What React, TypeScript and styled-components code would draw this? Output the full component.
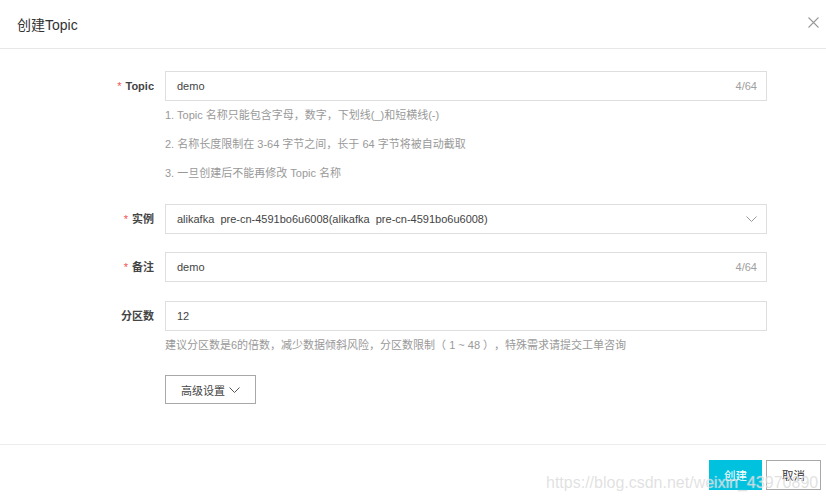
import React from 'react';
import styled, { createGlobalStyle } from 'styled-components';

const GlobalStyle = createGlobalStyle`
  html, body {
    margin: 0;
    padding: 0;
    background: #fff;
  }
  body {
    font-family: 'Liberation Sans', Arial, 'Noto Sans CJK SC', sans-serif;
    color: #333;
    text-spacing-trim: space-all;
    font-feature-settings: 'chws' 0, 'halt' 0, 'palt' 0;
  }
`;

const Chevron = ({ width = 11, height = 6, color = '#999' }) => (
  <svg width={width} height={height} viewBox="0 0 11 6" fill="none">
    <path d="M0.5 0.5 L5.5 5.5 L10.5 0.5" stroke={color} strokeWidth="1" />
  </svg>
);

const CloseIcon = () => (
  <svg width="11" height="11" viewBox="0 0 11 11" fill="none">
    <path d="M0.5 0.5 L10.5 10.5 M10.5 0.5 L0.5 10.5" stroke="#9a9a9a" strokeWidth="1.1" />
  </svg>
);

interface FieldProps {
  label: string;
  required?: boolean;
  children?: React.ReactNode;
}

const Field = ({ label, required, children }: FieldProps) => (
  <FormItem>
    <Label>
      {required && <Star>*</Star>}
      {label}
    </Label>
    <Control>{children}</Control>
  </FormItem>
);

const App = () => (
  <>
    <GlobalStyle />
    <Dialog>
      <Header>
        <Title>创建Topic</Title>
        <Close>
          <CloseIcon />
        </Close>
      </Header>

      <Body>
        <Field label="Topic" required>
          <InputBox>
            <Value>demo</Value>
            <Counter>4/64</Counter>
          </InputBox>
          <Hints>
            <Hint>1. Topic 名称只能包含字母，数字，下划线(_)和短横线(-)</Hint>
            <Hint>2. 名称长度限制在 3-64 字节之间，长于 64 字节将被自动截取</Hint>
            <Hint>3. 一旦创建后不能再修改 Topic 名称</Hint>
          </Hints>
        </Field>

        <Field label="实例" required>
          <InputBox>
            <Value>alikafka&nbsp; pre-cn-4591bo6u6008(alikafka&nbsp; pre-cn-4591bo6u6008)</Value>
            <Chevron />
          </InputBox>
        </Field>

        <Field label="备注" required>
          <InputBox>
            <Value>demo</Value>
            <Counter>4/64</Counter>
          </InputBox>
        </Field>

        <Field label="分区数">
          <InputBox>
            <Value>12</Value>
          </InputBox>
          <Hints>
            <Hint>建议分区数是6的倍数，减少数据倾斜风险，分区数限制（ 1 ~ 48 ），特殊需求请提交工单咨询</Hint>
          </Hints>
        </Field>

        <Field label="">
          <OutlineButton>
            高级设置
            <Chevron width={11} height={6} color="#555" />
          </OutlineButton>
        </Field>
      </Body>

      <Footer>
        <PrimaryButton>创建</PrimaryButton>
        <SecondaryButton>取消</SecondaryButton>
      </Footer>

      <Watermark>https://blog.csdn.net/weixin_43970890</Watermark>
    </Dialog>
  </>
);

export default App;

const Dialog = styled.div`
  position: relative;
  width: 826px;
  height: 503px;
  background: #fff;
  display: flex;
  flex-direction: column;
  overflow: hidden;
`;

const Header = styled.div`
  height: 48px;
  flex-shrink: 0;
  border-bottom: 1px solid #e8e8e8;
  display: flex;
  align-items: center;
  justify-content: space-between;
  padding: 0 7px 0 17px;
`;

const Title = styled.div`
  font-size: 14px;
  color: #333;
`;

const Close = styled.div`
  display: flex;
  margin-bottom: 3px;
`;

const Body = styled.div`
  flex: 1;
  padding-top: 22px;
`;

const FormItem = styled.div`
  display: flex;
  margin-bottom: 18.5px;
`;

const Label = styled.div`
  width: 154px;
  margin-right: 11px;
  height: 30px;
  line-height: 30px;
  text-align: right;
  font-size: 11px;
  font-weight: bold;
  color: #444;
`;

const Star = styled.span`
  color: #f0524f;
  font-weight: normal;
  margin-right: 4px;
`;

const Control = styled.div`
  width: 602px;
`;

const InputBox = styled.div`
  box-sizing: border-box;
  height: 30px;
  border: 1px solid #dedede;
  display: flex;
  align-items: center;
  padding: 0 9px 0 11px;
  font-size: 11px;
`;

const Value = styled.div`
  flex: 1;
  color: #444;
  white-space: nowrap;
`;

const Counter = styled.div`
  color: #a0a0a0;
`;

const Hints = styled.div`
  margin: 6px 0 3px;
  display: flex;
  flex-direction: column;
  gap: 12px;
`;

const Hint = styled.div`
  font-size: 11px;
  line-height: 17px;
  color: #999;
  white-space: nowrap;
`;

const OutlineButton = styled.div`
  box-sizing: border-box;
  display: inline-flex;
  align-items: center;
  gap: 4px;
  width: 91px;
  height: 29px;
  padding-left: 15px;
  border: 1px solid #a8a8a8;
  font-size: 11px;
  color: #444;
`;

const Footer = styled.div`
  box-sizing: border-box;
  height: 59px;
  flex-shrink: 0;
  border-top: 1px solid #ececec;
  display: flex;
  justify-content: flex-end;
  align-items: flex-start;
  gap: 4px;
  padding: 15px 5px 0 0;
`;

const BaseButton = styled.div`
  box-sizing: border-box;
  height: 30px;
  padding: 0 15px;
  display: flex;
  align-items: center;
  font-size: 11.5px;
`;

const PrimaryButton = styled(BaseButton)`
  background: #00c1de;
  color: #fff;
`;

const SecondaryButton = styled(BaseButton)`
  border: 1px solid #a8a8a8;
  color: #333;
  background: #fff;
`;

const Watermark = styled.div`
  position: absolute;
  left: 546px;
  top: 474px;
  font-family: 'Liberation Sans', Arial, sans-serif;
  font-size: 16px;
  color: rgba(205, 205, 205, 0.6);
  text-shadow: 0 0 1px rgba(255, 255, 255, 0.8);
  white-space: nowrap;
  pointer-events: none;
`;
